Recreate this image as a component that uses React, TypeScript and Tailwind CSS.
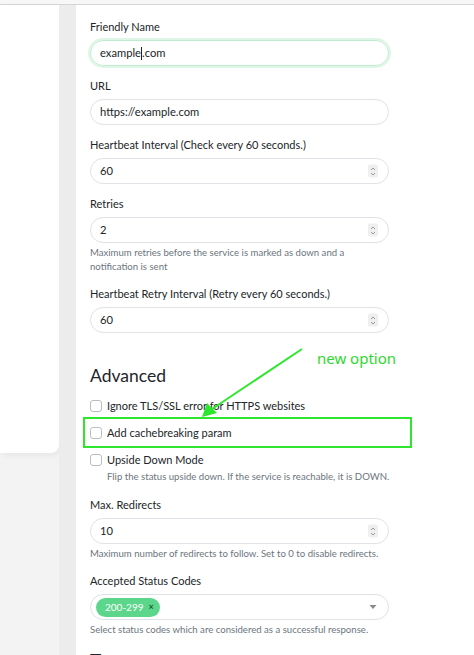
import { ReactNode } from "react";

// Small up/down spinner drawn at the right of number inputs
function Spinner() {
  return (
    <span className="absolute right-[10px] top-1/2 -translate-y-1/2 w-[10px] h-[13px] bg-[#efefef] rounded-[2px] flex items-center justify-center">
      <svg width="6" height="10" viewBox="0 0 6 10" fill="none" stroke="#9a9a9a" strokeWidth="1">
        <path d="M1 3.5 L3 1.5 L5 3.5" />
        <path d="M1 6.5 L3 8.5 L5 6.5" />
      </svg>
    </span>
  );
}

function Field({ label, children, help }: { label: string; children: ReactNode; help?: ReactNode }) {
  return (
    <div className="mb-[12px]">
      <div className="h-[16px] leading-[16px] text-[11px] text-[#212529] mb-[5px]">{label}</div>
      {children}
      {help && <div className="mt-[3px] text-[9.6px] leading-[14px] text-[#6c757d]">{help}</div>}
    </div>
  );
}

function Input({ value, number, focused }: { value: ReactNode; number?: boolean; focused?: boolean }) {
  return (
    <div
      className={
        focused
          ? "relative h-[26px] w-[299px] rounded-full border border-[#bfeccf] shadow-[0_0_0_2px_#dff6e7] flex items-center pl-[9px] text-[11.2px] text-[#212529]"
          : "relative h-[26px] w-[299px] rounded-full border border-[#dfe2e6] flex items-center pl-[9px] text-[11.2px] text-[#212529]"
      }
    >
      {value}
      {number && <Spinner />}
    </div>
  );
}

function Check({ label }: { label: string }) {
  return (
    <div className="h-[20px] flex items-center gap-[5px]">
      <span className="w-[12px] h-[12px] rounded-[3px] border border-[#b8bec4] bg-white" />
      <span className="text-[11px] text-[#212529]">{label}</span>
    </div>
  );
}

export default function App() {
  return (
    <div
      className="relative w-[474px] h-[655px] overflow-hidden bg-[#f3f3f3]"
      style={{ fontFamily: 'Lato, "Noto Sans", sans-serif' }}
    >
      {/* top strip */}
      <div className="h-[5px] bg-[#f7f7f7] border-b border-[#d6d6d6]" />

      <div className="flex">
        {/* left panel */}
        <div className="w-[59px] h-[448px] bg-white rounded-br-[8px] shadow-[2px_2px_6px_rgba(0,0,0,0.06)]" />
        <div className="w-[17px] bg-[#ececec]" />

        {/* main card */}
        <div className="flex-1 bg-white pl-[14px] pt-[14px] h-[700px]">
          <Field label="Friendly Name">
            <Input
              focused
              value={
                <span>
                  example<span className="inline-block w-px h-[13px] bg-[#222] align-middle" />.com
                </span>
              }
            />
          </Field>
          <Field label="URL">
            <Input value="https://example.com" />
          </Field>
          <Field label="Heartbeat Interval (Check every 60 seconds.)">
            <Input value="60" number />
          </Field>
          <Field
            label="Retries"
            help={
              <>
                Maximum retries before the service is marked as down and a
                <br />
                notification is sent
              </>
            }
          >
            <Input value="2" number />
          </Field>
          <Field label="Heartbeat Retry Interval (Retry every 60 seconds.)">
            <Input value="60" number />
          </Field>

          <h2 className="mt-[31px] h-[24px] leading-[24px] text-[17.5px] text-[#212529] mb-[8px]">Advanced</h2>

          <div className="flex flex-col gap-[7px]">
            <Check label="Ignore TLS/SSL error for HTTPS websites" />
            <Check label="Add cachebreaking param" />
            <div>
              <Check label="Upside Down Mode" />
              <div className="pl-[17px] text-[9.6px] leading-[14px] text-[#6c757d]">
                Flip the status upside down. If the service is reachable, it is DOWN.
              </div>
            </div>
          </div>

          <div className="mt-[13px]">
            <Field label="Max. Redirects" help="Maximum number of redirects to follow. Set to 0 to disable redirects.">
              <Input value="10" number />
            </Field>
            <Field label="Accepted Status Codes" help="Select status codes which are considered as a successful response.">
              <div className="relative h-[26px] w-[299px] rounded-full border border-[#dfe2e6] flex items-center pl-[5px]">
                <span className="h-[19px] rounded-full bg-[#5cd68b] text-white text-[10px] flex items-center pl-[9px] pr-[6px] gap-[5px]">
                  200-299
                  <span className="text-[9px] font-bold text-[#1c5a34]">×</span>
                </span>
                <svg className="absolute right-[11px] top-1/2 -translate-y-1/2" width="8" height="5" viewBox="0 0 8 5">
                  <path d="M0.5 0.5 L7.5 0.5 L4 4.5 Z" fill="#8a8a8a" />
                </svg>
              </div>
            </Field>
            <h2 className="mt-[1px] text-[19px] leading-[24px] text-[#212529]">Tags</h2>
          </div>
        </div>
      </div>

      {/* annotation overlay */}
      <div className="absolute left-[83px] top-[417px] w-[329px] h-[31px] border-2 border-[#2ee62e]" />
      <svg className="absolute left-0 top-0 pointer-events-none" width="474" height="655">
        <line x1="302" y1="349" x2="212" y2="409" stroke="#2ee62e" strokeWidth="2" />
        <polygon points="202,417 207,403 217,413" fill="#2ee62e" />
      </svg>
      <div
        className="absolute left-[317px] top-[348px] text-[15px] leading-[20px] text-[#2fd82f]"
        style={{ fontFamily: '"Noto Sans", sans-serif' }}
      >
        new option
      </div>
    </div>
  );
}
